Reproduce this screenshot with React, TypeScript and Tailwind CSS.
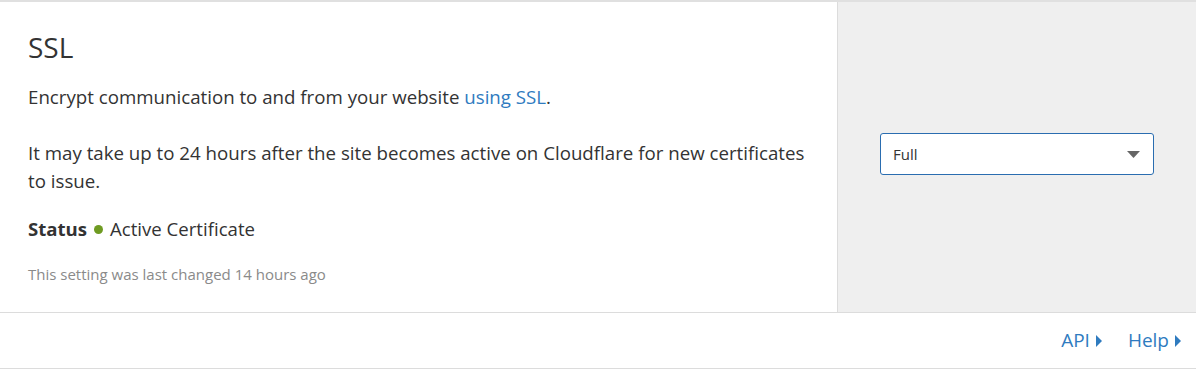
import React from "react";

export default function App() {
  return (
    <div
      className="w-[1196px] h-[370px] bg-white text-[#333]"
      style={{ fontFamily: '"Open Sans", "Noto Sans", sans-serif' }}
    >
      <div className="border-t-2 border-[#e0e0e0]">
        <div className="flex border-b border-[#dcdcdc]">
          <div className="w-[838px] border-r border-[#dcdcdc] pl-[28px] pr-[28px] pt-[27px] pb-[28px]">
            <h3 className="text-[28px] leading-[36px] font-normal text-[#333]">SSL</h3>
            <p className="mt-[18px] text-[18.7px] leading-[28px]">
              Encrypt communication to and from your website{" "}
              <a className="text-[#2f7bbf]">using SSL</a>.
            </p>
            <p className="mt-[28px] text-[18.7px] leading-[28px]">
              It may take up to 24 hours after the site becomes active on Cloudflare for new certificates to issue.
            </p>
            <div className="mt-[20px] flex items-center text-[18.6px] leading-[28px]">
              <span className="font-bold">Status</span>
              <span className="ml-[7px] mr-[7px] inline-block w-[9px] h-[9px] rounded-full bg-[#6f9b22]" />
              <span>Active Certificate</span>
            </div>
            <p className="mt-[21px] text-[15px] leading-[20px] text-[#8a8a8a]">
              This setting was last changed 14 hours ago
            </p>
          </div>
          <div className="flex-1 bg-[#efefef] flex items-center justify-center pb-[6px]">
            <div className="w-[274px] h-[42px] bg-white border border-[#2a6db0] rounded-[3px] flex items-center justify-between pl-[12px] pr-[13px]">
              <span className="text-[15px] text-[#333]">Full</span>
              <svg width="13" height="7" viewBox="0 0 13 7">
                <path d="M0 0 L13 0 L6.5 7 Z" fill="#666" />
              </svg>
            </div>
          </div>
        </div>
        <div className="h-[56px] flex items-center justify-end pr-[15px] gap-[26px] border-b border-[#dcdcdc] text-[19px] text-[#2f7bbf]">
          <a className="flex items-center gap-[6px]">
            API
            <svg width="6" height="12" viewBox="0 0 6 12">
              <path d="M0 0 L6 6 L0 12 Z" fill="#2f7bbf" />
            </svg>
          </a>
          <a className="flex items-center gap-[6px]">
            Help
            <svg width="6" height="12" viewBox="0 0 6 12">
              <path d="M0 0 L6 6 L0 12 Z" fill="#2f7bbf" />
            </svg>
          </a>
        </div>
      </div>
    </div>
  );
}
